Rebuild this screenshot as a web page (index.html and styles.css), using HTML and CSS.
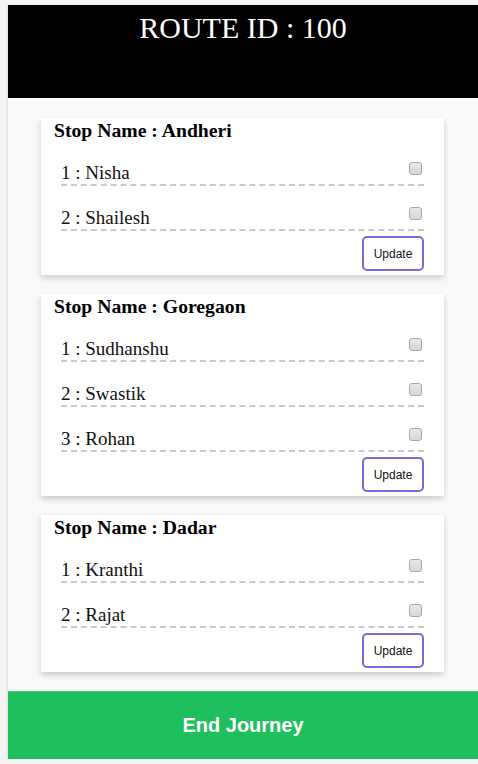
FILE: index.html
```html
<!DOCTYPE html>
<html>
<head>
<meta charset="utf-8">
<link rel="stylesheet" href="styles.css">
</head>
<body>
<div class="app">
  <header class="header"><h1 class="title">ROUTE ID : 100</h1></header>
  <main class="stops">
    <section class="card">
      <h3 class="stop-name">Stop Name : Andheri</h3>
      <ul class="list">
        <li class="row"><span>1 : Nisha</span><input type="checkbox" class="check"></li>
        <li class="row"><span>2 : Shailesh</span><input type="checkbox" class="check"></li>
      </ul>
      <div class="actions"><button class="update">Update</button></div>
    </section>
    <section class="card">
      <h3 class="stop-name">Stop Name : Goregaon</h3>
      <ul class="list">
        <li class="row"><span>1 : Sudhanshu</span><input type="checkbox" class="check"></li>
        <li class="row"><span>2 : Swastik</span><input type="checkbox" class="check"></li>
        <li class="row"><span>3 : Rohan</span><input type="checkbox" class="check"></li>
      </ul>
      <div class="actions"><button class="update">Update</button></div>
    </section>
    <section class="card">
      <h3 class="stop-name">Stop Name : Dadar</h3>
      <ul class="list">
        <li class="row"><span>1 : Kranthi</span><input type="checkbox" class="check"></li>
        <li class="row"><span>2 : Rajat</span><input type="checkbox" class="check"></li>
      </ul>
      <div class="actions"><button class="update">Update</button></div>
    </section>
  </main>
  <button class="end">End Journey</button>
</div>
</body>
</html>
```
FILE: styles.css
```css
html, body { margin: 0; padding: 0; }
body {
  background: #f4f4f4;
  font-family: "Liberation Serif", "Times New Roman", serif;
  padding: 5px 0 0 6px;
  height: 764px;
  box-sizing: border-box;
  overflow: hidden;
}
.app {
  border-left: 2px solid #e6e6e6;
  background: #f9f9f9;
  height: 754px;
}
.header {
  background: #000;
  height: 93px;
  box-sizing: border-box;
  padding-top: 5px;
}
.title {
  margin: 0;
  color: #fff;
  font-weight: normal;
  font-size: 30px;
  line-height: 36px;
  text-align: center;
}
.stops {
  padding: 20px 0 0;
  display: flex;
  flex-direction: column;
  gap: 19px;
}
.card {
  width: 403px;
  margin: 0 auto 0 33px;
  background: #fff;
  box-shadow: 0 3px 6px rgba(0,0,0,0.18);
  padding: 0 20px 4px 13px;
  box-sizing: border-box;
}
.stop-name {
  margin: 0;
  font-size: 19.7px;
  line-height: 22px;
  padding-top: 1px;
  font-weight: bold;
  color: #000;
}
.list {
  list-style: none;
  margin: 0;
  padding: 0 0 0 7px;
}
.row {
  display: flex;
  justify-content: space-between;
  align-items: flex-start;
  margin-top: 21px;
  font-size: 19px;
  line-height: 22px;
  color: #111;
  border-bottom: 2px dashed #c9c9c9;
}
.check {
  appearance: none;
  -webkit-appearance: none;
  width: 13px;
  height: 13px;
  margin: 0 2px 0 0;
  border: 1px solid #a8a8a8;
  border-radius: 3px;
  background: linear-gradient(#e8e8e8, #d6d6d6);
  box-sizing: border-box;
}
.actions {
  display: flex;
  justify-content: flex-end;
  margin-top: 5px;
}
.update {
  width: 62px;
  height: 35px;
  border: 2px solid #7a6cd6;
  border-radius: 5px;
  background: #fff;
  font-family: "Liberation Sans", Arial, sans-serif;
  font-size: 12px;
  color: #111;
  padding: 0;
}
.end {
  display: block;
  width: 100%;
  margin-top: 19px;
  height: 68px;
  border: none;
  border-top: 1px solid #4fd080;
  background: #1fbf5e;
  color: #fff;
  font-family: "Liberation Sans", Arial, sans-serif;
  font-weight: bold;
  font-size: 20px;
}
```
